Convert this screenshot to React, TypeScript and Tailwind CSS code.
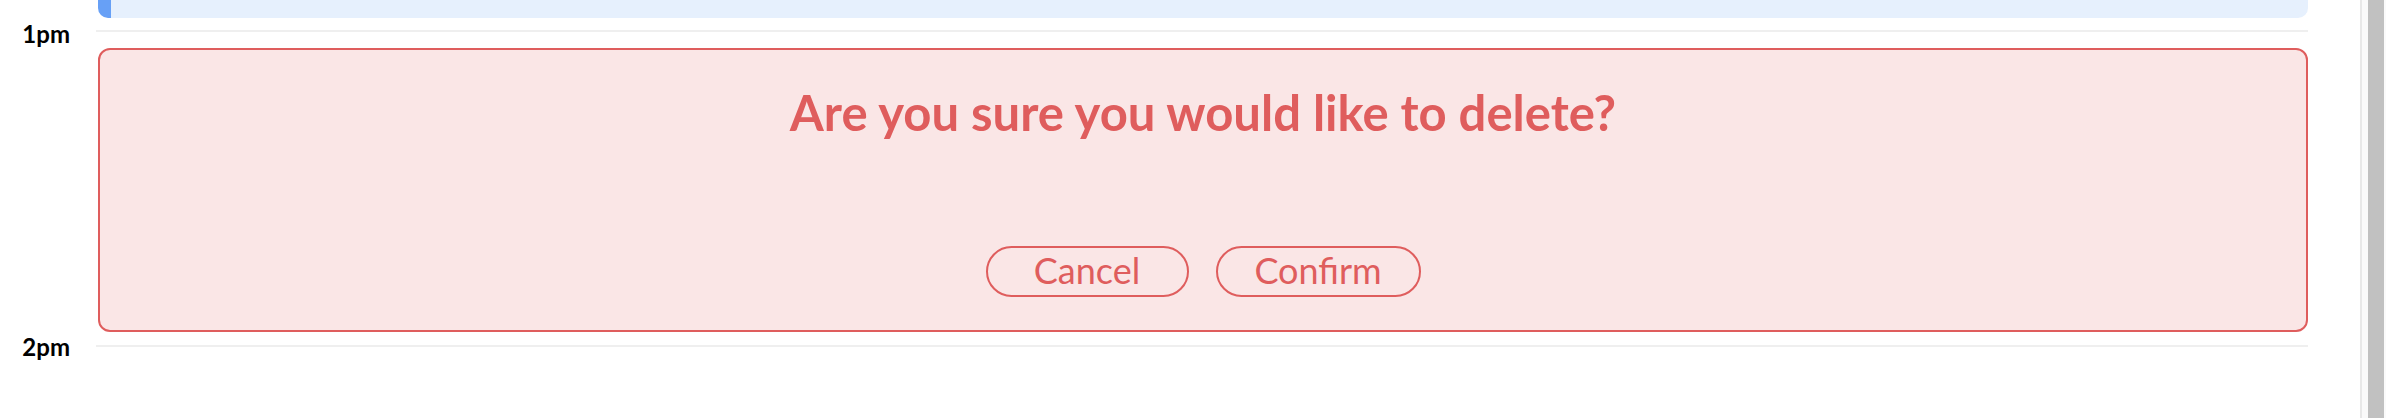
import React from 'react';

const RED = 'text-[#df5d5d]';

export default function App() {
  return (
    <div className="flex h-[418px] w-full overflow-hidden bg-white font-['Lato','Noto_Sans',sans-serif]">
      {/* Day column */}
      <div className="flex-1 flex flex-col">
        {/* tail of the previous event */}
        <div className="flex pb-3">
          <div className="w-[96px] shrink-0" />
          <div className="flex-1 mr-[52px] ml-[2px] flex h-[18px] overflow-hidden rounded-b-[10px]">
            <div className="w-[13px] bg-[#67a0f6]" />
            <div className="flex-1 bg-[#e6f0fd]" />
          </div>
        </div>

        {/* 1pm slot */}
        <div className="flex">
          <div className="w-[96px] shrink-0 pr-[26px] text-right">
            <span className="block -mt-2 text-[24px] leading-[24px] font-bold text-black">1pm</span>
          </div>
          <div className="flex-1 mr-[52px] border-t-2 border-[#efefef] pt-4 pb-[13px]">
            <div className="ml-[2px] flex flex-col items-center rounded-[12px] border-2 border-[#df5d5d] bg-[#fae6e6] pt-[38px] pb-[33px]">
              <h2 className={`text-[49px] leading-[49px] font-bold ${RED}`}>Are you sure you would like to delete?</h2>
              <div className="mt-[109px] flex gap-[27px]">
                <button className={`w-[203px] h-[51px] rounded-full border-2 border-[#df5d5d] pb-[3px] text-[36px] leading-[36px] ${RED}`}>
                  Cancel
                </button>
                <button className={`w-[205px] h-[51px] rounded-full border-2 border-[#df5d5d] pb-[3px] text-[36px] leading-[36px] ${RED}`}>
                  Confirm
                </button>
              </div>
            </div>
          </div>
        </div>

        {/* 2pm slot */}
        <div className="flex">
          <div className="w-[96px] shrink-0 pr-[26px] text-right">
            <span className="block -mt-[10px] text-[24px] leading-[24px] font-bold text-black">2pm</span>
          </div>
          <div className="flex-1 mr-[52px] border-t-2 border-[#efefef] h-[80px]" />
        </div>
      </div>

      {/* Scrollbar */}
      <div className="w-[26px] shrink-0 flex border-l-2 border-[#e8e8e8] bg-[#fafafa] pl-[6px] pr-[2px]">
        <div className="flex-1 bg-[#c1c1c1]" />
      </div>
    </div>
  );
}
